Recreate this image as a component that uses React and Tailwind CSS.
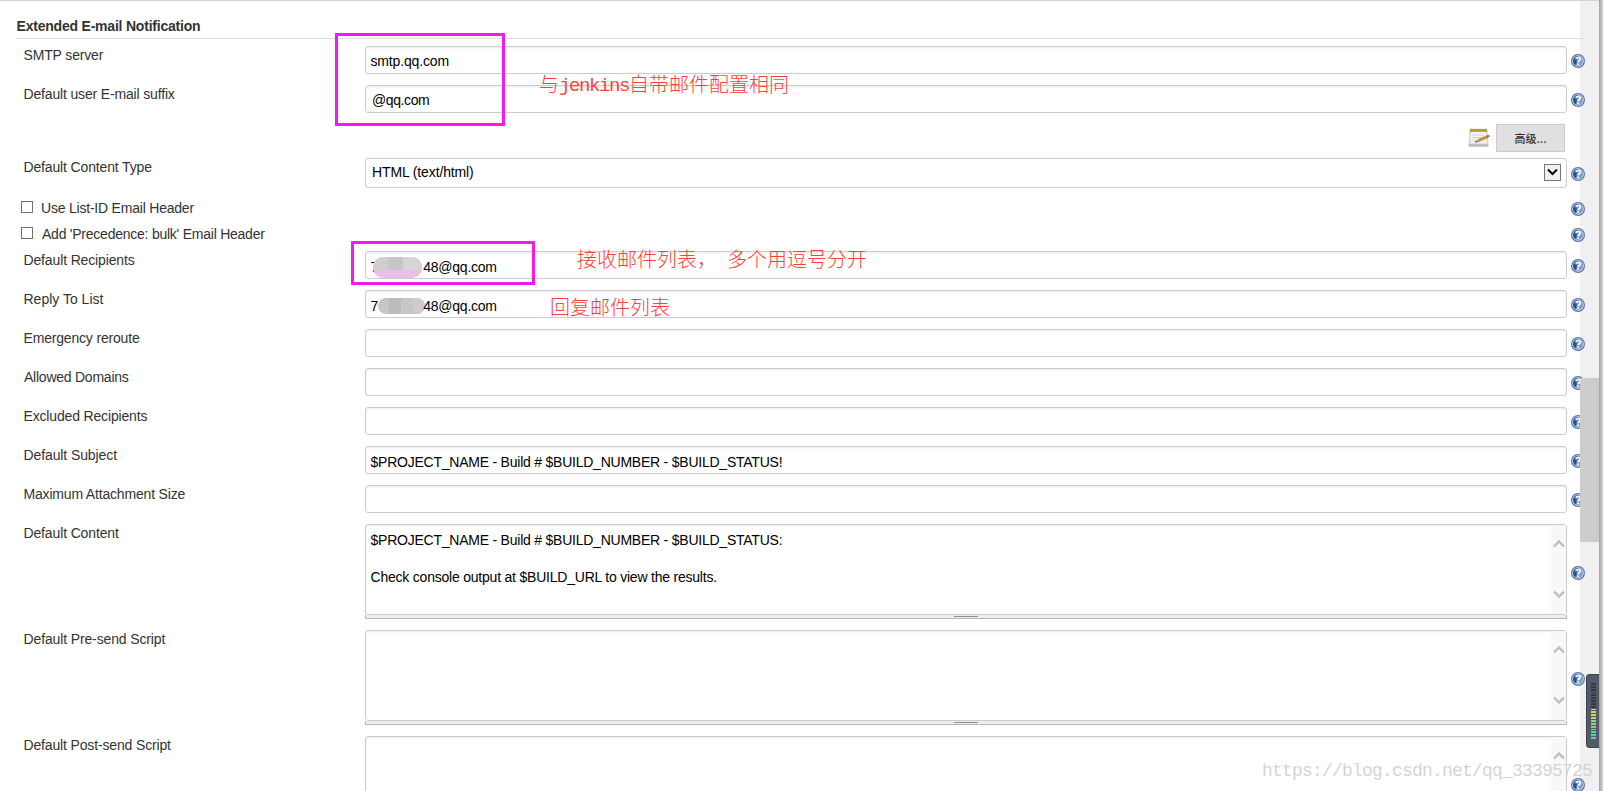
import React from 'react';

const HelpIcon = () => (
  <svg width="14" height="14" viewBox="0 0 14 14" className="block shrink-0">
    <circle cx="7" cy="7" r="6.4" fill="#dde6f3" stroke="#5275ab" strokeWidth="1.200" />
    <circle cx="7" cy="7" r="5" fill="#7f9cca" />
    <path d="M7 2a5 5 0 0 0-4.200 7.800L5 11.500 6.500 2z" fill="#24508f" />
    <path d="M5 5.300c0-2.500 4.200-2.300 4.200-.1 0 1.600-2 1.500-2 3" fill="none" stroke="#fff" strokeWidth="1.700" />
    <circle cx="7.100" cy="10.200" r="1" fill="#fff" />
  </svg>
);

const NotepadIcon = () => (
  <svg width="22" height="20" viewBox="0 0 22 20" className="block">
    <path d="M2 2h17l1 15H1z" fill="#e9e9e5" stroke="#c4c4c0" strokeWidth=".8" />
    <path d="M3.500 4.500h14l.5 10H3z" fill="#f6f7f5" />
    <path d="M.7 15.800h19.600v3H.7z" fill="#bdbdb9" />
    <path d="M2 1h17v2.800H2z" fill="#b9a63c" />
    <path d="M3 .5v3M6 .5v3M9 .5v3M12 .5v3M15 .5v3M18 .5v3" stroke="#8d7f2d" strokeWidth=".7" />
    <path d="M4 7h12M4 9.500h9M4 12h4" stroke="#c5c9ca" strokeWidth=".8" />
    <path d="M7.500 14l3-2.800 8.200-3.500 1 2-8.500 3.700z" fill="#cf9b46" stroke="#8c6528" strokeWidth=".5" />
    <path d="M18.600 7.600l1.800-.7c1.200 0 1.500 1.500.6 2l-1.500.7z" fill="#e2523c" />
    <path d="M6.500 14.600l1.800-2 1 1.500z" fill="#444" />
  </svg>
);

const Chevron = ({ down }) => (
  <svg width="12" height="9" viewBox="0 0 12 9" className="block">
    <path d={down ? 'M1 1.500l5 5 5-5' : 'M1 7.500l5-5 5 5'} fill="none" stroke="#bfbfbf" strokeWidth="2.400" />
  </svg>
);

const Label = ({ track, children }) => (
  <div className="-ml-[0.5px] w-[341.5px] shrink-0 whitespace-nowrap text-[#333]">
    <span className={track}>{children}</span>
  </div>
);

const Row = ({ label, track, children, inset = 'pl-[4.5px]' }) => (
  <div className="flex h-[39px] items-start">
    <div className="pt-px"><Label track={track}>{label}</Label></div>
    <div className={`mt-px flex h-7 w-[1202px] shrink-0 items-center rounded-[3px] border border-[#ccc] pt-px shadow-[inset_0_1px_2px_#ececec] ${inset}`}>
      {children}
    </div>
    <div className="mt-[9px] ml-1"><HelpIcon /></div>
  </div>
);

const Area = ({ label, track, children }) => (
  <div className="flex h-[106px] items-start">
    <div className="pt-px"><Label track={track}>{label}</Label></div>
    <div className="mt-px w-[1202px] shrink-0">
      <div className="flex h-[91px] justify-between rounded-[3px] border border-[#ccc] shadow-[inset_0_1px_2px_#ececec]">
        <div className="pt-[6px] pl-[4.5px] leading-[18.500px] text-black">{children}</div>
        <div className="flex w-[15px] flex-col items-center justify-between bg-[#f8f8f8] pt-[14px] pb-[15px]">
          <Chevron />
          <Chevron down />
        </div>
      </div>
      <div className="flex h-1 justify-center border-x border-b border-[#b8b8b0] bg-[#eee]">
        <div className="mt-px h-px w-6 bg-[#8e8e84]" />
      </div>
    </div>
    <div className="mt-[43px] ml-1"><HelpIcon /></div>
  </div>
);

const Check = ({ label, track, height }) => (
  <div className={`flex items-start justify-between ${height}`}>
    <div className="-ml-[3px] flex items-center gap-2">
      <span className="-mt-[2px] size-3 border border-[#707070] bg-white" />
      <span className={`text-[#333] ${track}`}>{label}</span>
    </div>
    <div className="-mr-[15px] mt-[3px]"><HelpIcon /></div>
  </div>
);

const METER = [
  'bg-[#343841]', 'bg-[#343841]', 'bg-[#343841]', 'bg-[#343841]', 'bg-[#343841]',
  'bg-[#343841]', 'bg-[#343841]', 'bg-[#343841]', 'bg-[#343841]',
  'bg-[#e7d94e]', 'bg-[#d8d858]', 'bg-[#c9d75f]', 'bg-[#b5d768]', 'bg-[#a3d573]', 'bg-[#8dd67d]',
  'bg-[#78d68b]', 'bg-[#65d69a]', 'bg-[#57d5aa]', 'bg-[#4dd4b5]', 'bg-[#48d2be]',
];

// Red remarks that float over the form
const Note = ({ place, children }) => (
  <div className={`absolute z-30 whitespace-pre font-['Noto_Sans_CJK_SC',sans-serif] text-[20px] leading-[24px] font-light text-[#ff3f3a] ${place}`}>
    {children}
  </div>
);

export default function App() {
  return (
    <div className="relative flex h-[791px] w-[1603px] overflow-hidden bg-white font-['Liberation_Sans',Arial,sans-serif] text-[14px] leading-[18px] text-black">
      <main className="w-[1580px] shrink-0 border-t border-[#d4d4cf]">
        <div className="relative z-10 ml-[17px] h-[38px] w-[1568px] border-b border-[#ddd] pt-4 font-bold text-[#333]">
          <span className="-ml-[0.5px] tracking-[-0.210px]">Extended E-mail Notification</span>
        </div>
        <div className="relative z-10 w-[1570px] pt-[6px] pl-6">
          <Row label="SMTP server" track="tracking-[-0.150px]">
            <span className="tracking-[-0.150px]">smtp.qq.com</span>
          </Row>
          <Row label="Default user E-mail suffix" track="tracking-[-0.160px]" inset="pl-[6px]">
            <span className="tracking-[-0.400px]">@qq.com</span>
          </Row>
          <div className="flex h-[35px] items-start justify-end pt-px pr-[5px]">
            <div className="mr-1.5 mt-1"><NotepadIcon /></div>
            <button className="h-7 w-[69px] border border-[#ccc] bg-[#e0e0e0] font-['Noto_Sans_CJK_SC',sans-serif] text-[11px] font-medium text-[#333]">高级...</button>
          </div>
          <div className="flex h-[41px] items-start">
            <Label track="tracking-[-0.150px]">Default Content Type</Label>
            <div className="flex h-[30px] w-[1202px] shrink-0 items-center justify-between rounded-[3px] border border-[#ccc] pr-[5px] pb-[2px] pl-1.5">
              <span className="tracking-[-0.130px]">HTML (text/html)</span>
              <span className="flex h-[17px] w-[17px] items-center justify-center border border-[#777] bg-[#f0f0f0]">
                <svg width="11" height="8" viewBox="0 0 11 8"><path d="M1 1.500l4.500 4.500L10 1.500" fill="none" stroke="#000" strokeWidth="2" /></svg>
              </span>
            </div>
            <div className="mt-[9px] ml-1"><HelpIcon /></div>
          </div>
          <Check label="Use List-ID Email Header" track="tracking-[-0.210px]" height="h-[26px]" />
          <Check label="Add 'Precedence: bulk' Email Header" track="pl-px tracking-[-0.240px]" height="h-[25px]" />
          <Row label="Default Recipients" track="tracking-[-0.140px]">
            <span className="pt-[2px]">7</span>
            <span className="-ml-[5px] mt-1 h-[21px] w-[49px] shrink-0 overflow-hidden rounded-[10px] bg-[#eabfea]">
              <span className="flex h-[13px] bg-[#cfcfcf]">
                <span className="ml-[15px] w-[15px] bg-[#c6c6c8]" />
                <span className="flex-1 bg-[#d6d6d4]" />
              </span>
            </span>
            <span className="ml-px pt-[2px] tracking-[-0.250px]">48@qq.com</span>
          </Row>
          <Row label="Reply To List">
            <span className="pt-[2px]">7</span>
            <span className="mt-[3px] flex h-4 w-[47px] shrink-0 overflow-hidden rounded-[8px] bg-[#c6c6c6]">
              <span className="ml-[11px] w-3 bg-[#bcbcbe]" />
              <span className="w-3 bg-[#c9c7c6]" />
              <span className="flex-1 bg-[#cfcdca]" />
            </span>
            <span className="-ml-[2px] pt-[2px] tracking-[-0.250px]">48@qq.com</span>
          </Row>
          <Row label="Emergency reroute" track="tracking-[-0.180px]" />
          <Row label="Allowed Domains" track="pl-[0.5px] tracking-[-0.240px]" />
          <Row label="Excluded Recipients" track="tracking-[-0.160px]" />
          <Row label="Default Subject" track="tracking-[-0.100px]">
            <span className="pt-[2px] tracking-[-0.230px]">$PROJECT_NAME - Build # $BUILD_NUMBER - $BUILD_STATUS!</span>
          </Row>
          <Row label="Maximum Attachment Size" track="tracking-[-0.180px]" />
          <Area label="Default Content" track="tracking-[-0.140px]">
            <p className="tracking-[-0.230px]">$PROJECT_NAME - Build # $BUILD_NUMBER - $BUILD_STATUS:</p>
            <p className="mt-[18px] tracking-[-0.215px]">Check console output at $BUILD_URL to view the results.</p>
          </Area>
          <Area label="Default Pre-send Script" track="tracking-[-0.130px]" />
          <Area label="Default Post-send Script" track="tracking-[-0.150px]" />
        </div>
      </main>
      <div className="w-[19px] shrink-0 border-t border-[#d4d4cf] bg-[#f0f0f0] pt-[377px]">
        <div className="relative z-20 h-[164px] bg-[#cdcdcd]" />
      </div>
      <div className="w-1 shrink-0 bg-gradient-to-r from-[#a0a0a0] to-[#d8d8d8]" />

      {/* Annotations */}
      <div className="absolute top-[33px] left-[335px] z-30 h-[93px] w-[170px] border-3 border-[#f519f0]" />
      <div className="absolute top-[241px] left-[351px] z-30 h-[44px] w-[184px] border-3 border-[#f519f0]" />
      <Note place="top-[72px] left-[539px]">
        与<span className="relative -top-px font-['Liberation_Mono',monospace] text-[19px] font-normal tracking-[-1.400px]">jenkins</span>自带邮件配置相同
      </Note>
      <Note place="top-[247px] left-[577px]">
        接收邮件列表，<span className="inline-block w-[10px]" />多个用逗号分开
      </Note>
      <Note place="top-[295px] left-[550px]">回复邮件列表</Note>

      {/* Volume meter docked at the screen edge */}
      <div className="absolute top-[674px] left-[1586px] z-30 flex h-[74px] w-[13px] flex-col gap-px rounded-l-[4px] border border-r-0 border-[#3d414c] bg-[#555a69] pt-[8px] pr-[3px] pb-[8px] pl-1">
        {METER.map((color, i) => (
          <span key={i} className={`w-full flex-1 ${color}`} />
        ))}
      </div>

      <div className="absolute top-[761px] left-[1262px] z-30 font-['Liberation_Mono',monospace] text-[18px] leading-[20px] tracking-[-0.800px] text-[#c9c9c0]/80">
        https://blog.csdn.net/qq_33395725
      </div>
    </div>
  );
}
